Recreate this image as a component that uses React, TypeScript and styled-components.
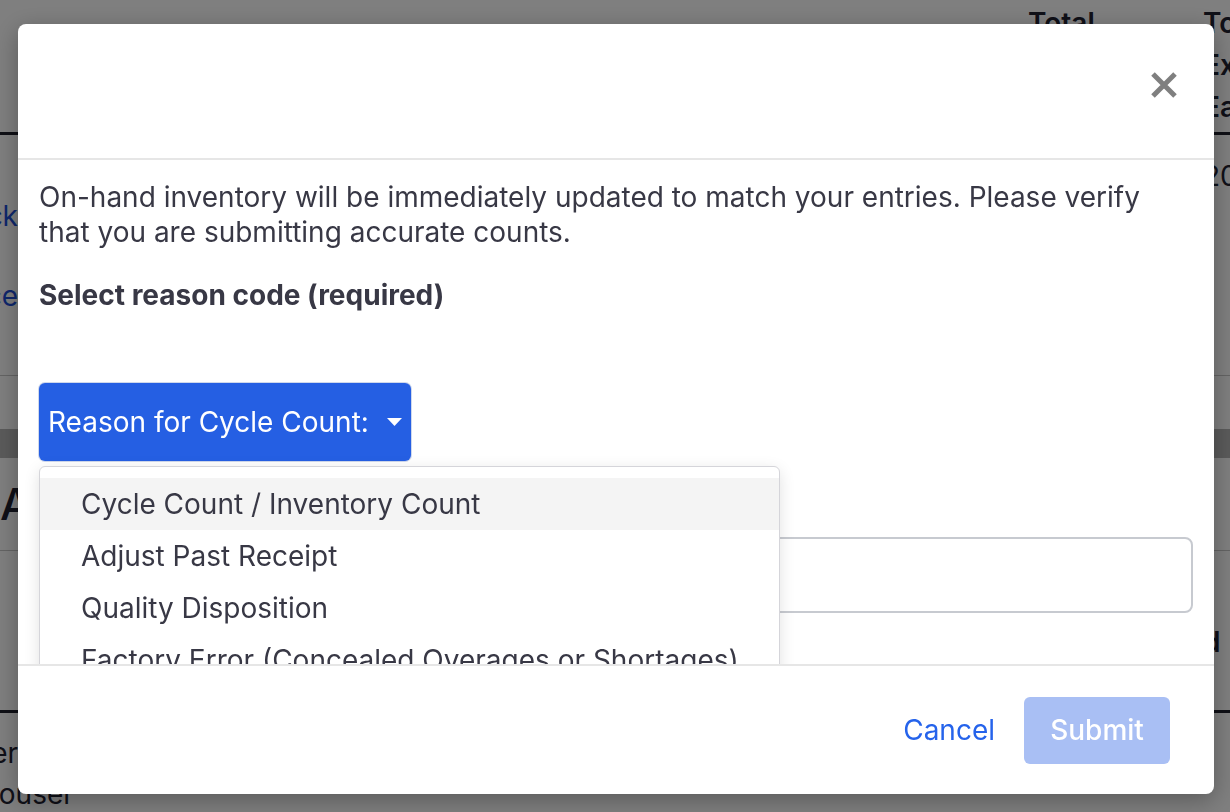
import React from "react";
import styled, { createGlobalStyle } from "styled-components";

const GlobalStyle = createGlobalStyle`
  html, body {
    margin: 0;
    padding: 0;
    background: #ffffff;
    font-family: Inter, "Noto Sans", sans-serif;
    color: #1f2130;
  }
  * { box-sizing: border-box; }
`;

/* ---------- page behind the modal ---------- */

const Page = styled.div`
  width: 1230px;
  height: 812px;
  overflow: hidden;
  display: flex;
  flex-direction: column;
`;

const TableRow = styled.div<{ $h: number; $border?: string }>`
  display: grid;
  grid-template-columns: 18px 1010px 175px 1fr;
  height: ${(p) => p.$h}px;
  flex-shrink: 0;
  border-bottom: ${(p) => p.$border || "none"};
`;

const Cell = styled.div<{ $right?: boolean; $bold?: boolean; $pt?: number }>`
  display: flex;
  flex-direction: column;
  align-items: ${(p) => (p.$right ? "flex-end" : "flex-start")};
  overflow: hidden;
  white-space: nowrap;
  padding-top: ${(p) => p.$pt || 0}px;
  font-size: 28px;
  line-height: 42px;
  font-weight: ${(p) => (p.$bold ? 600 : 400)};
  color: #1f2130;
`;

const Link = styled.span<{ $mt?: number }>`
  color: #1d4ed8;
  margin-top: ${(p) => p.$mt || 0}px;
`;

const Band = styled.div`
  height: 29px;
  margin-top: 53px;
  flex-shrink: 0;
  background: #b6b6b6;
`;

const SectionTitle = styled.h2`
  margin: 0;
  height: 93px;
  flex-shrink: 0;
  display: flex;
  align-items: center;
  font-size: 44px;
  font-weight: 500;
  border-bottom: 1px solid #c8c8c8;
`;

const LowerText = styled.div`
  font-size: 28px;
  line-height: 40px;
  margin-left: -22px;
  white-space: nowrap;
`;

/* ---------- modal ---------- */

const Overlay = styled.div`
  position: fixed;
  inset: 0;
  background: rgba(0, 0, 0, 0.5);
  display: flex;
  padding: 24px 16px 18px 18px;
`;

const Modal = styled.div`
  flex: 1;
  display: flex;
  flex-direction: column;
  background: #ffffff;
  border-radius: 8px;
  box-shadow: 0 6px 24px rgba(0, 0, 0, 0.3);
  overflow: hidden;
`;

const Header = styled.div`
  height: 136px;
  flex-shrink: 0;
  display: flex;
  justify-content: flex-end;
  align-items: flex-start;
  padding: 47px 36px 0 0;
  border-bottom: 2px solid #e6e6e6;
`;

const CloseButton = styled.button`
  width: 28px;
  height: 28px;
  padding: 0;
  border: none;
  background: transparent;
  display: flex;
  cursor: pointer;
`;

const Body = styled.div`
  flex: 1;
  position: relative;
  overflow: hidden;
  padding: 20px 21px 0;
  color: #383845;
`;

const Intro = styled.p`
  margin: 0;
  font-size: 28px;
  line-height: 35px;
`;

const Label = styled.div`
  margin-top: 28px;
  font-size: 28px;
  line-height: 35px;
  font-weight: 700;
`;

const Dropdown = styled.div`
  position: relative;
  margin-top: 70px;
  display: inline-block;
`;

const ToggleButton = styled.button`
  height: 78px;
  display: flex;
  align-items: center;
  gap: 18px;
  padding: 0 9px;
  border: none;
  border-radius: 6px;
  background: #255fe3;
  box-shadow: 0 0 0 1px #cfd8ec;
  color: #ffffff;
  font-family: inherit;
  font-size: 28px;
  cursor: pointer;
`;

const Menu = styled.ul`
  position: absolute;
  top: calc(100% + 5px);
  left: 0;
  width: 741px;
  margin: 0;
  padding: 11px 0;
  list-style: none;
  background: #ffffff;
  border: 1px solid #d5d5da;
  border-radius: 6px;
  box-shadow: 0 4px 16px rgba(0, 0, 0, 0.12);
  z-index: 2;
`;

const MenuItem = styled.li<{ $active?: boolean }>`
  height: 52px;
  line-height: 52px;
  padding-left: 41px;
  font-size: 28px;
  color: #383845;
  white-space: nowrap;
  background: ${(p) => (p.$active ? "#f4f4f4" : "transparent")};
`;

const Input = styled.input`
  display: block;
  width: 100%;
  height: 76px;
  margin-top: 76px;
  border: 2px solid #c7cad0;
  border-radius: 8px;
  font-family: inherit;
  font-size: 28px;
`;

const Footer = styled.div`
  height: 130px;
  flex-shrink: 0;
  display: flex;
  align-items: center;
  justify-content: flex-end;
  padding-right: 44px;
  border-top: 2px solid #e6e6e6;
`;

const TextButton = styled.button`
  margin-right: 29px;
  padding: 0;
  border: none;
  background: transparent;
  color: #2563eb;
  font-family: inherit;
  font-size: 28px;
  cursor: pointer;
`;

const SubmitButton = styled.button`
  width: 146px;
  height: 67px;
  border: none;
  border-radius: 6px;
  background: #a9bff4;
  color: #ffffff;
  font-family: inherit;
  font-size: 28px;
  font-weight: 500;
`;

const reasons = [
  "Cycle Count / Inventory Count",
  "Adjust Past Receipt",
  "Quality Disposition",
  "Factory Error (Concealed Overages or Shortages)",
  "Damaged in Warehouse",
];

export default function App() {
  return (
    <>
      <GlobalStyle />
      <Page>
        <TableRow $h={135} $border="3px solid #1e1f2b">
          <Cell />
          <Cell />
          <Cell $bold $pt={2}>
            <span>Total</span>
            <span>Quantity</span>
            <span>Ordered</span>
          </Cell>
          <Cell $bold $pt={2}>
            <span>Total</span>
            <span>Expected</span>
            <span>Each</span>
          </Cell>
        </TableRow>
        <TableRow $h={241} $border="1px solid #c8c8c8">
          <Cell $right $pt={60}>
            <Link>Track</Link>
            <Link $mt={38}>Source</Link>
          </Cell>
          <Cell />
          <Cell />
          <Cell $pt={20}>
            <span>2024</span>
          </Cell>
        </TableRow>
        <Band />
        <SectionTitle>Adjustments</SectionTitle>
        <TableRow $h={162} $border="3px solid #1e1f2b">
          <Cell />
          <Cell />
          <Cell />
          <Cell $bold $pt={70}>
            <span>d</span>
          </Cell>
        </TableRow>
        <TableRow $h={61}>
          <Cell $right $pt={19}>
            <span>Member</span>
          </Cell>
        </TableRow>
        <LowerText>Houser</LowerText>
      </Page>

      <Overlay>
        <Modal>
          <Header>
            <CloseButton aria-label="Close">
              <svg width="28" height="28" viewBox="0 0 28 28">
                <path d="M3 3 L25 25 M25 3 L3 25" stroke="#7f7f7f" strokeWidth="5" />
              </svg>
            </CloseButton>
          </Header>
          <Body>
            <Intro>
              On-hand inventory will be immediately updated to match your entries. Please verify
              that you are submitting accurate counts.
            </Intro>
            <Label>Select reason code (required)</Label>
            <Dropdown>
              <ToggleButton>
                Reason for Cycle Count:
                <svg width="15" height="8" viewBox="0 0 15 8">
                  <path d="M0 0 H15 L7.5 8 Z" fill="#ffffff" />
                </svg>
              </ToggleButton>
              <Menu>
                {reasons.map((r, i) => (
                  <MenuItem key={r} $active={i === 0}>
                    {r}
                  </MenuItem>
                ))}
              </Menu>
            </Dropdown>
            <Input />
          </Body>
          <Footer>
            <TextButton>Cancel</TextButton>
            <SubmitButton disabled>Submit</SubmitButton>
          </Footer>
        </Modal>
      </Overlay>
    </>
  );
}
